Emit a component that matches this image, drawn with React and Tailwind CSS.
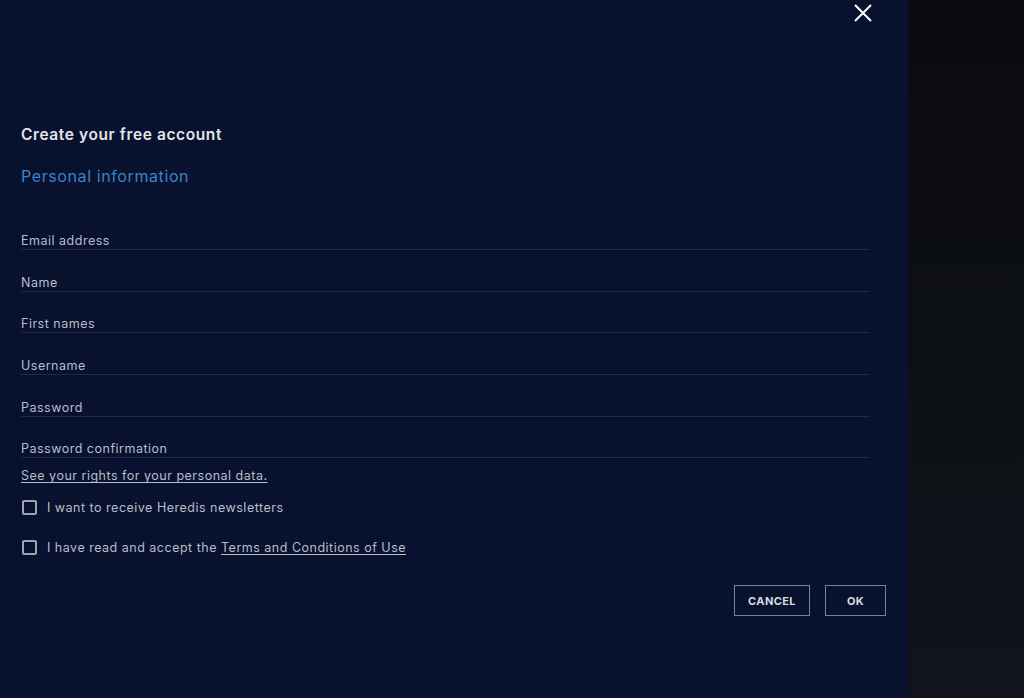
import React from 'react';

const fields = [
  'Email address',
  'Name',
  'First names',
  'Username',
  'Password',
  'Password confirmation',
];

export default function App() {
  return (
    <div
      className="flex h-[698px] w-[1024px] overflow-hidden bg-gradient-to-b from-[#090b11] to-[#12141b]"
      style={{ fontFamily: 'Inter, "Open Sans", "Liberation Sans", sans-serif' }}
    >
      <div className="relative flex h-full w-[908px] flex-col bg-[#08112e] pl-[21px] pr-[38px]">
        {/* Close */}
        <button className="absolute left-[852px] top-[2px] p-[1px] text-white">
          <svg width="20" height="20" viewBox="0 0 20 20" fill="none" stroke="currentColor" strokeWidth="2">
            <path d="M2 2 L18 18 M18 2 L2 18" />
          </svg>
        </button>

        <h1 className="mt-[124px] text-[15.5px] font-semibold leading-[22px] tracking-[0.6px] text-[#e4e5ea]">
          Create your free account
        </h1>
        <h2 className="mt-[19px] text-[16px] leading-[22px] tracking-[0.6px] text-[#3b84c9]">Personal information</h2>

        <div className="mt-[45px] flex w-[849px] flex-col">
          {fields.map((f, i) => (
            <div
              key={f}
              className={`border-b border-[#1f2a47] ${i === 0 ? '' : 'mt-[23.7px]'}`}
            >
              <span className="block text-[12.5px] leading-[17px] tracking-[0.5px] text-[#b9bdca]">{f}</span>
            </div>
          ))}
        </div>

        <a href="#" className="mt-[9px] block w-fit text-[12.5px] leading-[17px] tracking-[0.5px] text-[#b9bdca] underline underline-offset-2">
          See your rights for your personal data.
        </a>

        <label className="mt-[15px] flex items-center gap-[10px] text-[12.5px] leading-[17px] text-[#b9bdca]">
          <span className="ml-[1px] h-[15px] w-[15px] rounded-[2px] border-2 border-[#9ea3b1]" />
          <span className="tracking-[0.5px]">I want to receive Heredis newsletters</span>
        </label>
        <label className="mt-[23px] flex items-center gap-[10px] text-[12.5px] leading-[17px] text-[#b9bdca]">
          <span className="ml-[1px] h-[15px] w-[15px] rounded-[2px] border-2 border-[#9ea3b1]" />
          <span className="tracking-[0.5px]">
            I have read and accept the{' '}
            <a href="#" className="underline underline-offset-2">Terms and Conditions of Use</a>
          </span>
        </label>

        <div className="mt-[29px] flex justify-end gap-[15px]">
          <button className="h-[31px] w-[76px] border border-[#7b8196] text-[11px] font-bold tracking-[0.4px] text-[#d9dbe2]">
            CANCEL
          </button>
          <button className="mr-[-16px] h-[31px] w-[61px] border border-[#7b8196] text-[11px] font-bold tracking-[0.4px] text-[#d9dbe2]">
            OK
          </button>
        </div>
      </div>
      <div className="flex-1" />
    </div>
  );
}
